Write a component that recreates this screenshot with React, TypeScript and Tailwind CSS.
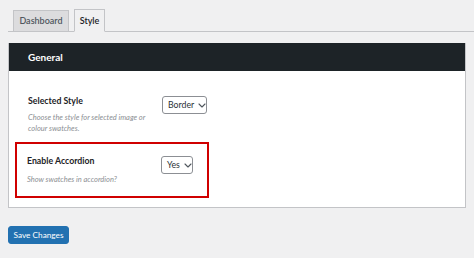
const font = { fontFamily: 'Lato, "Noto Sans", sans-serif' }

function Chevron() {
    return (
        <svg width="8" height="5" viewBox="0 0 8 5" fill="none" className="shrink-0">
            <path d="M1 1l3 3 3-3" stroke="#50575e" strokeWidth="1.1" strokeLinecap="round" strokeLinejoin="round" />
        </svg>
    )
}

function Select({ value, width }: { value: string; width: string }) {
    return (
        <div className={`${width} h-[18px] flex items-center gap-[4px] pl-[5px] bg-white border border-[#8c8f94] rounded-[3px] text-[8.75px] text-[#2c3338]`}>
            <span>{value}</span>
            <Chevron />
        </div>
    )
}

export default function App() {
    return (
        <div className="w-[474px] h-[258px] bg-[#f0f0f1] px-[8px] overflow-hidden" style={font}>
            {/* Tabs */}
            <div className="flex items-end gap-[5px] pl-[5px] pt-[9px] border-b border-[#c3c4c7] -mr-[8px]">
                <div className="h-[22px] mb-[-1px] w-[56px] flex items-center justify-center bg-[#dcdcde] border border-[#c3c4c7] text-[9px] font-semibold text-[#50575e]">
                    Dashboard
                </div>
                <div className="h-[23px] mb-[-1px] w-[31px] flex items-center justify-center bg-[#f0f0f1] border border-[#c3c4c7] border-b-[#f0f0f1] text-[9px] font-semibold text-[#1d2327]">
                    Style
                </div>
            </div>

            {/* Panel */}
            <div className="mt-[11px] w-[458px] bg-white border border-[#c3c4c7] border-t-0">
                <div className="h-[28px] bg-[#1d2327] pl-[19px] flex items-center text-[10px] font-bold text-white">
                    General
                </div>
                <div className="px-[6px] pt-[24px] pb-[9px]">
                    <div className="flex px-[13px]">
                        <div className="w-[134px]">
                            <div className="text-[8.75px] leading-[12px] font-bold text-[#1d2327]">Selected Style</div>
                            <div className="mt-[5px] w-[124px] text-[7.5px] leading-[11px] italic text-[#8c8f94]">
                                Choose the style for selected image or colour swatches.
                            </div>
                        </div>
                        <div className="mt-[1px]">
                            <Select value="Border" width="w-[45px]" />
                        </div>
                    </div>

                    <div className="mt-[8px] w-[194px] border-2 border-[#d00000] px-[10px] pt-[11px] pb-[11px] flex">
                        <div className="w-[134px]">
                            <div className="text-[8.75px] leading-[12px] font-bold text-[#1d2327]">Enable Accordion</div>
                            <div className="mt-[7px] text-[7.5px] leading-[11px] italic text-[#8c8f94]">
                                Show swatches in accordion?
                            </div>
                        </div>
                        <div className="mt-[1px]">
                            <Select value="Yes" width="w-[32px]" />
                        </div>
                    </div>
                </div>
            </div>

            {/* Save */}
            <button className="mt-[18px] h-[18px] w-[61px] bg-[#2271b1] border border-[#2271b1] rounded-[3px] text-[8.25px] text-white flex items-center justify-center">
                Save Changes
            </button>
        </div>
    )
}
